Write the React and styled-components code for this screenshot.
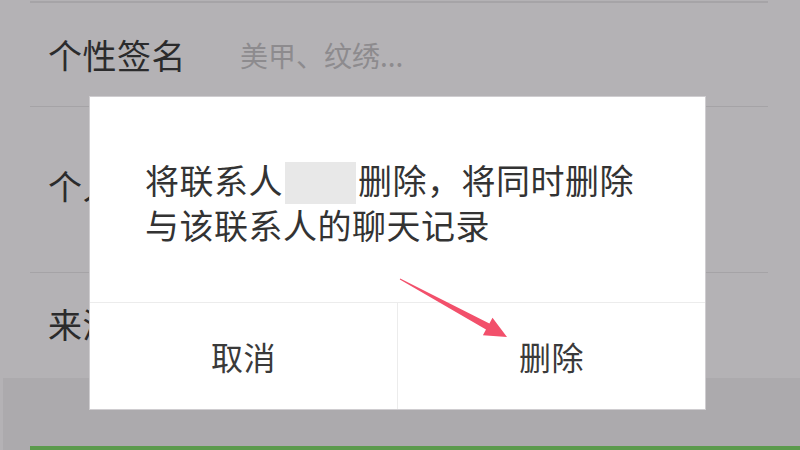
import React from "react";
import styled, { createGlobalStyle } from "styled-components";

const GlobalStyle = createGlobalStyle`
  html, body {
    margin: 0;
    padding: 0;
    background: #b4b2b5;
  }
  body {
    font-family: "Noto Sans CJK SC", "Noto Sans", sans-serif;
  }
`;

const Screen = styled.div`
  position: relative;
  width: 800px;
  height: 450px;
  overflow: hidden;
  background: #b4b2b5;
  display: flex;
  flex-direction: column;
`;

const TopLine = styled.div`
  height: 2px;
  margin: 1px 32px 0 30px;
  background: #a6a4a7;
`;

const InfoRow = styled.div`
  display: flex;
  align-items: center;
  height: ${(p) => p.$height}px;
  padding: ${(p) => p.$pad || "0"};
  box-sizing: border-box;
  margin: 0 32px 0 30px;
  padding-left: 18px;
  border-bottom: ${(p) => (p.$last ? "none" : "1px solid #a5a3a6")};
`;

const RowLabel = styled.div`
  font-size: 34px;
  color: #2b2b2c;
  width: 192px;
  flex-shrink: 0;
  letter-spacing: 0.5px;
`;

const RowValue = styled.div`
  font-size: 28px;
  color: #8d8b8e;
`;

const Footer = styled.div`
  flex: 1;
  margin-left: 3px;
  background: #acaaad;
  display: flex;
  flex-direction: column;
  justify-content: flex-end;
`;

const GreenLine = styled.div`
  height: 4px;
  margin-left: 27px;
  background: #5b9a4c;
`;

const Dialog = styled.div`
  position: absolute;
  left: 90px;
  top: 97px;
  width: 615px;
  height: 312px;
  background: #ffffff;
  box-shadow: 0 0 0 1px #cfcdd0;
  display: flex;
  flex-direction: column;
`;

const Message = styled.div`
  height: 206px;
  box-sizing: border-box;
  padding: 62px 40px 0 55px;
  font-size: 34px;
  line-height: 41px;
  letter-spacing: 0.5px;
  color: #333333;
  border-bottom: 1px solid #ececec;
`;

const Masked = styled.span`
  display: inline-block;
  width: 71px;
  height: 42px;
  margin: 0 2px 0 2px;
  vertical-align: -10px;
  background: #e8e8e8;
`;

const Actions = styled.div`
  flex: 1;
  display: grid;
  grid-template-columns: 307px 1fr;
`;

const ActionButton = styled.div`
  display: flex;
  align-items: center;
  justify-content: center;
  font-size: 32px;
  color: #3a3a3a;
  letter-spacing: 0.5px;
  border-left: ${(p) => (p.$divider ? "1px solid #ececec" : "none")};
`;

const Pointer = styled.svg`
  position: absolute;
  left: 395px;
  top: 272px;
  width: 120px;
  height: 80px;
`;

export default function App() {
  return (
    <>
      <GlobalStyle />
      <Screen>
        <TopLine />
        <InfoRow $height={104}>
          <RowLabel>个性签名</RowLabel>
          <RowValue>美甲、纹绣...</RowValue>
        </InfoRow>
        <InfoRow $height={166} $pad="0 0 8px 0">
          <RowLabel>个人相册</RowLabel>
        </InfoRow>
        <InfoRow $height={105} $pad="0 0 4px 0" $last>
          <RowLabel>来源</RowLabel>
        </InfoRow>
        <Footer>
          <GreenLine />
        </Footer>

        <Dialog>
          <Message>
            将联系人<Masked />删除，将同时删除
            <br />
            与该联系人的聊天记录
          </Message>
          <Actions>
            <ActionButton>取消</ActionButton>
            <ActionButton $divider>删除</ActionButton>
          </Actions>
        </Dialog>

        <Pointer viewBox="0 0 120 80">
          <polygon
            points="5.2,6.6 94.4,51.4 97.5,45.7 112,65 87.9,63.3 91,57.6 4.8,7.4"
            fill="#f2506b"
          />
        </Pointer>
      </Screen>
    </>
  );
}
